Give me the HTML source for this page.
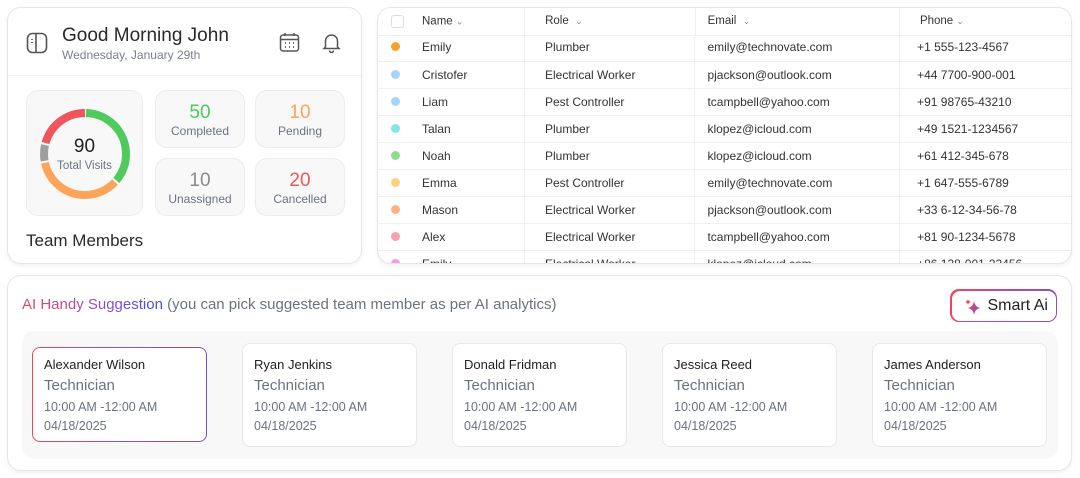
<!DOCTYPE html>
<html><head><meta charset="utf-8"><style>
*{box-sizing:border-box;margin:0;padding:0}
body{width:1080px;height:478px;background:#fff;font-family:"Liberation Sans",sans-serif;position:relative;overflow:hidden;color:#222}
.card{position:absolute;background:#fff;border:1px solid #e6e6e6;border-radius:14px;box-shadow:0 2px 4px rgba(0,0,0,.06)}
.a{position:absolute;white-space:nowrap}
.box{position:absolute;background:#f8f8f8;border:1px solid #ececec;border-radius:12px;text-align:center}
.box .n{font-size:19px;margin-top:11px}
.box .l{font-size:12px;color:#6b7280;margin-top:0px}
table{border-collapse:collapse;font-size:12px;color:#333;position:absolute;left:0;top:0}
td{height:27px;border-bottom:1px solid #f0f0f0;padding:0}
.dot{display:inline-block;width:9px;height:9px;border-radius:50%}
.m{position:absolute;top:12px;width:175px;height:104px;background:#fff;border:1px solid #e8e8e8;border-radius:8px;padding:13px 0 0 11px}
.m .a1{font-size:13px;color:#222}
.m .a2{font-size:15px;color:#6b7280;margin-top:5px}
.m .a3{font-size:12.5px;color:#6b7280;margin-top:4px;line-height:19px}
</style></head><body>
<div class="card" style="left:7px;top:7px;width:355px;height:257px">
 <svg class="a" style="left:18px;top:24px" width="22" height="22" viewBox="0 0 22 22" fill="none" stroke="#555" stroke-width="1.6"><rect x="1.5" y="1.5" width="19" height="19" rx="5"/><line x1="10" y1="1.5" x2="10" y2="20.5"/><line x1="6" y1="7" x2="6" y2="8"/><line x1="6" y1="10" x2="6" y2="11"/></svg>
 <div class="a" style="left:54px;top:17px;font-size:19px;color:#2a2a2a">Good Morning John</div>
 <div class="a" style="left:54px;top:40px;font-size:12px;color:#7a7f8c">Wednesday, January 29th</div>
 <svg class="a" style="left:271px;top:24px" width="21" height="21" viewBox="0 0 21 21" fill="none" stroke="#555" stroke-width="1.5"><rect x="1.5" y="3" width="18" height="16" rx="2.5"/><line x1="1.5" y1="7.5" x2="19.5" y2="7.5"/><line x1="6" y1="1" x2="6" y2="4"/><line x1="15" y1="1" x2="15" y2="4"/><g stroke-width="1.8"><line x1="6" y1="11" x2="7" y2="11"/><line x1="10" y1="11" x2="11" y2="11"/><line x1="14" y1="11" x2="15" y2="11"/><line x1="6" y1="15" x2="7" y2="15"/><line x1="10" y1="15" x2="11" y2="15"/><line x1="14" y1="15" x2="15" y2="15"/></g></svg>
 <svg class="a" style="left:314px;top:24px" width="19" height="21" viewBox="0 0 19 21" fill="none" stroke="#555" stroke-width="1.5"><path d="M3.5 15V9a6 6 0 0 1 12 0v6l1.5 1.5H2z"/><path d="M7.5 18.5a2 2 0 0 0 4 0"/></svg>
 <div class="a" style="left:0;top:67px;width:355px;border-top:1px solid #eee"></div>
 <div class="box" style="left:18px;top:82px;width:117px;height:126px"></div>
 <svg class="a" style="left:27px;top:96px" width="100" height="100" viewBox="0 0 100 100">
  <g transform="rotate(-90 50 50)" fill="none" stroke-width="8">
   <circle cx="50" cy="50" r="41" stroke="#4fca5c" stroke-dasharray="92 258" stroke-dashoffset="-1"/>
   <circle cx="50" cy="50" r="41" stroke="#fea35a" stroke-dasharray="89 258" stroke-dashoffset="-95"/>
   <circle cx="50" cy="50" r="41" stroke="#9e9e9e" stroke-dasharray="16 258" stroke-dashoffset="-186"/>
   <circle cx="50" cy="50" r="41" stroke="#f0555d" stroke-dasharray="54 258" stroke-dashoffset="-204"/>
  </g>
 </svg>
 <div class="a" style="left:25px;top:128px;width:103px;text-align:center;font-size:19px;color:#222">90</div>
 <div class="a" style="left:25px;top:152px;width:103px;text-align:center;font-size:11.5px;color:#6b7280">Total Visits</div>
 <div class="box" style="left:147px;top:82px;width:90px;height:58px"><div class="n" style="color:#4fca5c">50</div><div class="l">Completed</div></div>
 <div class="box" style="left:247px;top:82px;width:90px;height:58px"><div class="n" style="color:#fea35a">10</div><div class="l">Pending</div></div>
 <div class="box" style="left:147px;top:150px;width:90px;height:58px"><div class="n" style="color:#8b8b8b">10</div><div class="l">Unassigned</div></div>
 <div class="box" style="left:247px;top:150px;width:90px;height:58px"><div class="n" style="color:#f0555d">20</div><div class="l">Cancelled</div></div>
 <div class="a" style="left:18px;top:223px;font-size:17px;color:#2a2a2a">Team Members</div>
</div>

<div class="card" style="left:377px;top:7px;width:695px;height:257px;overflow:hidden">
<table>
<tr style="color:#333;font-size:11.5px"><td style="width:147px;height:26px;padding-left:13px;border-right:1px solid #f0f0f0"><span style="display:inline-block;width:13px;height:13px;border:1px solid #ddd;border-radius:3px;vertical-align:middle;margin-right:18px"></span>Name <span style="color:#888;font-size:9px">&#8964;</span></td><td style="width:171px;padding-left:20px;border-right:1px solid #f0f0f0">Role &nbsp;<span style="color:#888;font-size:9px">&#8964;</span></td><td style="width:205px;padding-left:12px;border-right:1px solid #f0f0f0">Email &nbsp;<span style="color:#888;font-size:9px">&#8964;</span></td><td style="width:172px;padding-left:20px">Phone <span style="color:#888;font-size:9px">&#8964;</span></td></tr>
</table>
<table style="top:26px">
<colgroup><col style="width:147px"><col style="width:171px"><col style="width:205px"><col style="width:172px"></colgroup>
<tbody>
<tr><td style="padding-left:13px;border-right:1px solid #f0f0f0"><span class="dot" style="background:#f9a12d;margin-right:22px"></span>Emily</td><td style="padding-left:20px;border-right:1px solid #f0f0f0">Plumber</td><td style="padding-left:12px;border-right:1px solid #f0f0f0">emily@technovate.com</td><td style="padding-left:17px">+1 555-123-4567</td></tr>
<tr><td style="padding-left:13px;border-right:1px solid #f0f0f0"><span class="dot" style="background:#a8d3fb;margin-right:22px"></span>Cristofer</td><td style="padding-left:20px;border-right:1px solid #f0f0f0">Electrical Worker</td><td style="padding-left:12px;border-right:1px solid #f0f0f0">pjackson@outlook.com</td><td style="padding-left:17px">+44 7700-900-001</td></tr>
<tr><td style="padding-left:13px;border-right:1px solid #f0f0f0"><span class="dot" style="background:#a8d3fb;margin-right:22px"></span>Liam</td><td style="padding-left:20px;border-right:1px solid #f0f0f0">Pest Controller</td><td style="padding-left:12px;border-right:1px solid #f0f0f0">tcampbell@yahoo.com</td><td style="padding-left:17px">+91 98765-43210</td></tr>
<tr><td style="padding-left:13px;border-right:1px solid #f0f0f0"><span class="dot" style="background:#7de8e4;margin-right:22px"></span>Talan</td><td style="padding-left:20px;border-right:1px solid #f0f0f0">Plumber</td><td style="padding-left:12px;border-right:1px solid #f0f0f0">klopez@icloud.com</td><td style="padding-left:17px">+49 1521-1234567</td></tr>
<tr><td style="padding-left:13px;border-right:1px solid #f0f0f0"><span class="dot" style="background:#8ddc8e;margin-right:22px"></span>Noah</td><td style="padding-left:20px;border-right:1px solid #f0f0f0">Plumber</td><td style="padding-left:12px;border-right:1px solid #f0f0f0">klopez@icloud.com</td><td style="padding-left:17px">+61 412-345-678</td></tr>
<tr><td style="padding-left:13px;border-right:1px solid #f0f0f0"><span class="dot" style="background:#fed27a;margin-right:22px"></span>Emma</td><td style="padding-left:20px;border-right:1px solid #f0f0f0">Pest Controller</td><td style="padding-left:12px;border-right:1px solid #f0f0f0">emily@technovate.com</td><td style="padding-left:17px">+1 647-555-6789</td></tr>
<tr><td style="padding-left:13px;border-right:1px solid #f0f0f0"><span class="dot" style="background:#fdb283;margin-right:22px"></span>Mason</td><td style="padding-left:20px;border-right:1px solid #f0f0f0">Electrical Worker</td><td style="padding-left:12px;border-right:1px solid #f0f0f0">pjackson@outlook.com</td><td style="padding-left:17px">+33 6-12-34-56-78</td></tr>
<tr><td style="padding-left:13px;border-right:1px solid #f0f0f0"><span class="dot" style="background:#f6a3ad;margin-right:22px"></span>Alex</td><td style="padding-left:20px;border-right:1px solid #f0f0f0">Electrical Worker</td><td style="padding-left:12px;border-right:1px solid #f0f0f0">tcampbell@yahoo.com</td><td style="padding-left:17px">+81 90-1234-5678</td></tr>
<tr><td style="padding-left:13px;border-right:1px solid #f0f0f0"><span class="dot" style="background:#f39be8;margin-right:22px"></span>Emily</td><td style="padding-left:20px;border-right:1px solid #f0f0f0">Electrical Worker</td><td style="padding-left:12px;border-right:1px solid #f0f0f0">klopez@icloud.com</td><td style="padding-left:17px">+86 138-001-23456</td></tr>
</tbody></table>
</div>

<div class="card" style="left:7px;top:275px;width:1065px;height:196px">
 <div class="a" style="left:14px;top:20px;font-size:15px;color:#6b7280"><span style="background:linear-gradient(90deg,#f0455a,#8a4fc8 60%,#3a4fe0);-webkit-background-clip:text;background-clip:text;color:transparent">AI Handy Suggestion</span> (you can pick suggested team member as per AI analytics)</div>
 <div class="a" style="left:942px;top:13px;width:107px;height:33px;border-radius:9px;padding:1.5px;background:linear-gradient(90deg,#f0455a,#8a4fc8)"><div style="background:#fff;border-radius:8px;height:100%;font-size:16px;color:#222;padding:6px 0 0 36px;position:relative">Smart Ai<svg style="position:absolute;left:12px;top:7px" width="18" height="18" viewBox="0 0 18 18"><defs><linearGradient id="g" x1="0" y1="0" x2="1" y2="1"><stop offset="0" stop-color="#f0455a"/><stop offset="1" stop-color="#8a4fc8"/></linearGradient></defs><path d="M10 3 Q11 9 16 10 Q11 11 10 17 Q9 11 4 10 Q9 9 10 3Z" fill="url(#g)"/><path d="M4 1 Q4.5 3.5 7 4 Q4.5 4.5 4 7 Q3.5 4.5 1 4 Q3.5 3.5 4 1Z" fill="#f0455a"/></svg></div></div>
 <div class="a" style="left:14px;top:55px;width:1036px;height:128px;background:#f8f8f8;border-radius:12px">
  <div class="m" style="left:10px;top:16px;height:95px;border:1.5px solid transparent;background:linear-gradient(#fff,#fff) padding-box,linear-gradient(90deg,#f0455a,#7a4fc8) border-box;padding:9px 0 0 11px"><div class="a1">Alexander Wilson</div><div class="a2">Technician</div><div class="a3">10:00 AM -12:00 AM<br>04/18/2025</div></div>
  <div class="m" style="left:220px"><div class="a1">Ryan Jenkins</div><div class="a2">Technician</div><div class="a3">10:00 AM -12:00 AM<br>04/18/2025</div></div>
  <div class="m" style="left:430px"><div class="a1">Donald Fridman</div><div class="a2">Technician</div><div class="a3">10:00 AM -12:00 AM<br>04/18/2025</div></div>
  <div class="m" style="left:640px"><div class="a1">Jessica Reed</div><div class="a2">Technician</div><div class="a3">10:00 AM -12:00 AM<br>04/18/2025</div></div>
  <div class="m" style="left:850px"><div class="a1">James Anderson</div><div class="a2">Technician</div><div class="a3">10:00 AM -12:00 AM<br>04/18/2025</div></div>
 </div>
</div>
</body></html>
